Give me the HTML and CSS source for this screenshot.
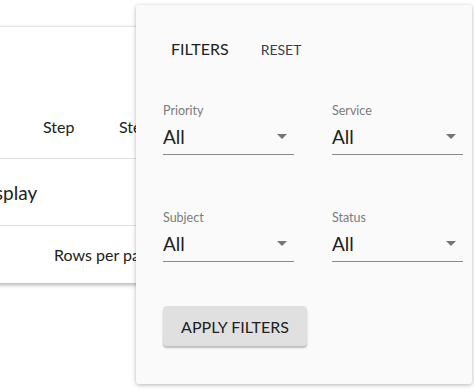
FILE: index.html
```html
<!DOCTYPE html>
<html lang="en">
  <head>
    <meta charset="UTF-8" />
    <meta name="viewport" content="width=device-width, initial-scale=1.0" />
    <title>Tickets</title>
    <link rel="stylesheet" href="styles.css">
  </head>
  <body>
    <div class="page">
      <div class="table-card">
        <div class="toolbar"></div>
        <div class="row head-row">
          <div class="cell cell-first"></div>
          <div class="cell">Step</div>
          <div class="cell">Step status</div>
        </div>
        <div class="row body-row">
          <div class="cell cell-wide">Display</div>
        </div>
        <div class="table-footer">
          <span>Rows per page:</span>
        </div>
      </div>
    </div>

    <div class="filter-panel">
      <div class="filter-head">
        <span class="filter-title">FILTERS</span>
        <span class="filter-reset">RESET</span>
      </div>
      <div class="filter-grid">
        <div class="field">
          <label>Priority</label>
          <div class="select">
            <span>All</span>
            <span class="caret"></span>
          </div>
        </div>
        <div class="field">
          <label>Service</label>
          <div class="select">
            <span>All</span>
            <span class="caret"></span>
          </div>
        </div>
        <div class="field">
          <label>Subject</label>
          <div class="select">
            <span>All</span>
            <span class="caret"></span>
          </div>
        </div>
        <div class="field">
          <label>Status</label>
          <div class="select">
            <span>All</span>
            <span class="caret"></span>
          </div>
        </div>
      </div>
      <button class="apply-btn">APPLY FILTERS</button>
    </div>
  </body>
</html>
```

FILE: styles.css
```css
body {
  font-family: Lato, "Open Sans", sans-serif;
  margin: 0;
  padding: 0;
  background-color: #fff;
  color: #212121;
  overflow: hidden;
}
.page {
  width: 137px;
  height: 300px;
  padding-top: 26px;
  overflow: hidden;
}
.table-card {
  margin-left: -24px;
  width: 420px;
  background-color: #fff;
  border-top: 1px solid #e4e4e4;
  box-shadow: 0 2px 4px rgba(0, 0, 0, 0.3);
}
.toolbar {
  height: 71px;
}
.row {
  display: flex;
  align-items: center;
  border-bottom: 1px solid #e0e0e0;
}
.head-row {
  height: 61px;
  font-size: 16px;
  padding-bottom: 3px;
  box-sizing: border-box;
}
.body-row {
  height: 66px;
  font-size: 19px;
}
.cell {
  width: 76px;
  white-space: nowrap;
}
.cell-first {
  width: 67px;
}
.cell-wide {
  width: auto;
}
.table-footer {
  height: 57px;
  display: flex;
  align-items: center;
  padding-left: 78px;
  font-size: 16px;
  white-space: nowrap;
}
.filter-panel {
  position: absolute;
  left: 136px;
  top: 5px;
  width: 309px;
  height: 379px;
  padding-left: 27px;
  background-color: #fafafa;
  border-radius: 3px;
  box-shadow: 0 1px 4px rgba(0, 0, 0, 0.3);
}
.filter-head {
  display: flex;
  align-items: baseline;
  padding: 34px 0 0 8px;
  height: 48px;
}
.filter-title {
  font-size: 16px;
  color: #212121;
  margin-right: 32px;
}
.filter-reset {
  font-size: 14px;
  color: #3c3c50;
}
.filter-grid {
  display: grid;
  grid-template-columns: 131px 131px;
  column-gap: 38px;
  row-gap: 55px;
  margin-top: 16px;
}
.field label {
  display: block;
  font-size: 12.5px;
  color: #7a7a7a;
  height: 17px;
}
.select {
  display: flex;
  align-items: center;
  justify-content: space-between;
  height: 35px;
  border-bottom: 1px solid #8a8a8a;
  font-size: 19px;
  padding-bottom: 1px;
  box-sizing: border-box;
}
.caret {
  width: 0;
  height: 0;
  border-left: 5px solid transparent;
  border-right: 5px solid transparent;
  border-top: 5px solid #757575;
  margin-right: 7px;
}
.apply-btn {
  display: block;
  margin-top: 44px;
  width: 144px;
  height: 40px;
  border: none;
  border-radius: 4px;
  background-color: #e0e0e0;
  color: #212121;
  font-family: inherit;
  font-size: 16px;
  box-shadow: 0 2px 2px rgba(0, 0, 0, 0.25);
}
```
